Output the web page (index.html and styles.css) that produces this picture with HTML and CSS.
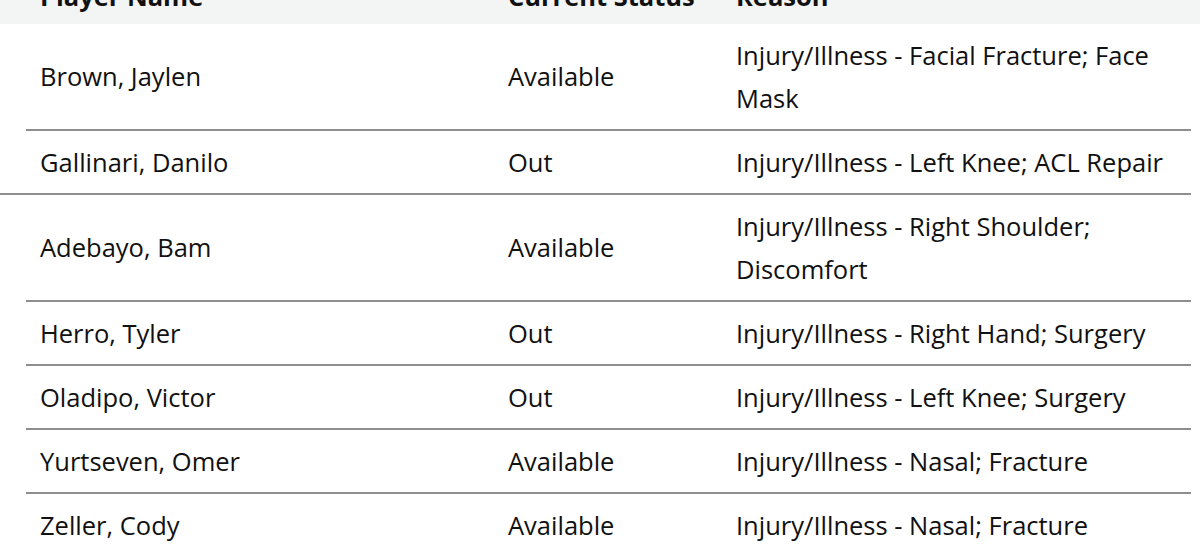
FILE: index.html
```html
<!DOCTYPE html>
<html lang="en">
<head>
<meta charset="utf-8">
<title>Injury Report</title>
<link rel="stylesheet" href="styles.css">
</head>
<body>
<div class="report">
  <div class="head">
    <div class="grid">
      <div class="cell">Player Name</div>
      <div class="cell">Current Status</div>
      <div class="cell">Reason</div>
    </div>
  </div>
  <div class="row">
    <div class="cell">Brown, Jaylen</div>
    <div class="cell">Available</div>
    <div class="cell">Injury/Illness - Facial Fracture; Face<br>Mask</div>
  </div>
  <div class="row row--wide">
    <div class="cell">Gallinari, Danilo</div>
    <div class="cell">Out</div>
    <div class="cell">Injury/Illness - Left Knee; ACL Repair</div>
  </div>
  <div class="row">
    <div class="cell">Adebayo, Bam</div>
    <div class="cell">Available</div>
    <div class="cell">Injury/Illness - Right Shoulder;<br>Discomfort</div>
  </div>
  <div class="row">
    <div class="cell">Herro, Tyler</div>
    <div class="cell">Out</div>
    <div class="cell">Injury/Illness - Right Hand; Surgery</div>
  </div>
  <div class="row">
    <div class="cell">Oladipo, Victor</div>
    <div class="cell">Out</div>
    <div class="cell">Injury/Illness - Left Knee; Surgery</div>
  </div>
  <div class="row">
    <div class="cell">Yurtseven, Omer</div>
    <div class="cell">Available</div>
    <div class="cell">Injury/Illness - Nasal; Fracture</div>
  </div>
  <div class="row row--last">
    <div class="cell">Zeller, Cody</div>
    <div class="cell">Available</div>
    <div class="cell">Injury/Illness - Nasal; Fracture</div>
  </div>
</div>
</body>
</html>
```

FILE: styles.css
```css
html, body {
  margin: 0;
  padding: 0;
  background: #ffffff;
}

body {
  font-family: "Open Sans", "Noto Sans", "DejaVu Sans", sans-serif;
  font-size: 25.5px;
  line-height: 43px;
  color: #111111;
  overflow: hidden;
}

.report {
  margin-top: -35px;
}

.head {
  background: #f3f5f5;
  padding-left: 26px;
  font-weight: 700;
}

.grid,
.row {
  display: grid;
  grid-template-columns: 468px 230px 1fr;
  align-items: center;
}

.head .cell {
  padding: 9.5px 0 6.5px 14px;
}

.row {
  width: 1165px;
  margin-left: 26px;
  border-bottom: 2px solid #8e8e8e;
}

.row--wide {
  width: 1165px;
  margin-left: 0;
  padding-left: 26px;
}

.row--last {
  border-bottom: none;
}

.row .cell {
  padding: 9.5px 0 9.5px 14px;
}

.row .cell:last-child {
  padding-left: 12px;
}

.head .cell:last-child {
  padding-left: 12px;
}
```
